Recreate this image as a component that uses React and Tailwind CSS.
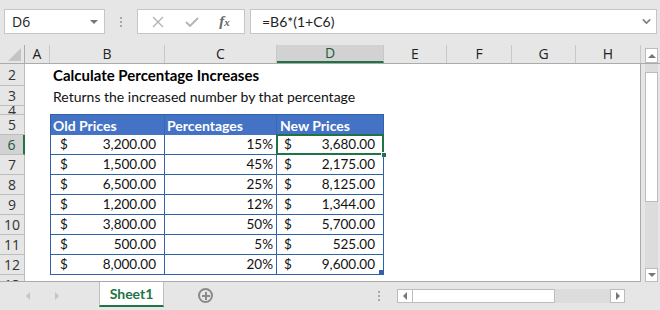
import { ChevronDown } from 'lucide-react';

const cols = [
  { key: 'A', w: 25 },
  { key: 'B', w: 115 },
  { key: 'C', w: 112 },
  { key: 'D', w: 107 },
  { key: 'E', w: 63 },
  { key: 'F', w: 65 },
  { key: 'G', w: 64 },
  { key: 'H', w: 65 },
];

const data = [
  ['3,200.00', '15%', '3,680.00'],
  ['1,500.00', '45%', '2,175.00'],
  ['6,500.00', '25%', '8,125.00'],
  ['1,200.00', '12%', '1,344.00'],
  ['3,800.00', '50%', '5,700.00'],
  ['500.00', '5%', '525.00'],
  ['8,000.00', '20%', '9,600.00'],
];

const cellFont = { fontFamily: 'Lato, "Liberation Sans", sans-serif' };
const uiFont = { fontFamily: '"Open Sans", "DejaVu Sans", sans-serif' };

function RowHead({ n, h, active }) {
  return (
    <div
      className={`w-[25px] shrink-0 flex items-center justify-center border-b border-r text-[14px] leading-none overflow-hidden ${
        active ? 'bg-[#d2d2d2] border-r-2 border-r-[#217346] border-b-[#bdbdbd] text-[#1e5a3a]' : 'bg-[#e6e6e6] border-[#bdbdbd] text-[#333]'
      }`}
      style={{ height: h, ...uiFont }}
    >
      {n}
    </div>
  );
}

function TableRow({ n, row, idx }) {
  const active = idx === 0;
  return (
    <div className="flex h-[20px]">
      <RowHead n={n} h={20} active={active} />
      <div className="w-[25px] shrink-0" />
      <div className="w-[115px] shrink-0 flex items-center justify-between pl-[9px] pr-[8px] border-l border-r border-b border-[#2f62a8] text-[13.5px] text-[#111]" style={cellFont}>
        <span>$</span>
        <span>{row[0]}</span>
      </div>
      <div className="w-[112px] shrink-0 flex items-center justify-end pr-[3px] border-r border-b border-[#2f62a8] text-[13.5px] text-[#111]" style={cellFont}>
        {row[1]}
      </div>
      <div className="relative w-[107px] shrink-0 flex items-center justify-between pl-[7px] pr-[8px] border-r border-b border-[#2f62a8] text-[13.5px] text-[#111]" style={cellFont}>
        <span>$</span>
        <span>{row[2]}</span>
        {active && (
          <>
            <div className="absolute -left-[1px] -top-[1px] -right-[1px] -bottom-[1px] border-2 border-[#217346]" />
            <div className="absolute -right-[4px] -bottom-[4px] w-[6px] h-[6px] bg-[#217346] border border-white" />
          </>
        )}
        {idx === 6 && <div className="absolute right-0 bottom-0 w-[4px] h-[4px] bg-[#2f62a8]" />}
      </div>
    </div>
  );
}

export default function App() {
  return (
    <div className="w-[660px] h-[310px] bg-[#e6e6e6] overflow-hidden relative select-none" style={uiFont}>
      {/* formula bar */}
      <div className="h-[45px] flex items-start pt-[9px] pl-[4px]">
        <div className="w-[101px] h-[25px] bg-white border border-[#c6c6c6] flex items-center justify-between pl-[7px] pr-[6px]">
          <span className="text-[14px] text-[#222]">D6</span>
          <span className="w-0 h-0 border-l-[4px] border-r-[4px] border-t-[4px] border-l-transparent border-r-transparent border-t-[#777]" />
        </div>
        <div className="w-[32px] h-[25px] flex flex-col items-center justify-center gap-[2px]">
          <span className="w-[2px] h-[2px] bg-[#a8a8a8]" />
          <span className="w-[2px] h-[2px] bg-[#a8a8a8]" />
          <span className="w-[2px] h-[2px] bg-[#a8a8a8]" />
        </div>
        <div className="w-[108px] h-[25px] bg-white border border-[#c6c6c6] flex items-center justify-around px-[4px]">
          <svg width="12" height="12" viewBox="0 0 12 12">
            <path d="M1 1 L11 11 M11 1 L1 11" stroke="#b3b3b3" strokeWidth="1.4" fill="none" />
          </svg>
          <svg width="14" height="12" viewBox="0 0 14 12">
            <path d="M1 6 L5 10 L13 2" stroke="#b3b3b3" strokeWidth="1.8" fill="none" />
          </svg>
          <span className="text-[15px] italic font-bold text-[#666] leading-none" style={{ fontFamily: '"Liberation Serif", serif' }}>
            f<span className="text-[11px]">x</span>
          </span>
        </div>
        <div className="ml-[5px] w-[407px] h-[25px] bg-white border border-[#c6c6c6] flex items-center justify-between pl-[11px] pr-[3px]">
          <span className="text-[14px] text-[#222]" style={cellFont}>=B6*(1+C6)</span>
          <ChevronDown size={13} strokeWidth={3} color="#808080" />
        </div>
      </div>

      {/* column headers */}
      <div className="flex h-[19px] border-b border-[#ababab]">
        <div className="w-[25px] shrink-0 border-r border-[#ababab] flex items-end justify-end pr-[3px] pb-[2px]">
          <svg width="13" height="13" viewBox="0 0 13 13">
            <path d="M13 0 L13 13 L0 13 Z" fill="#c4c4c4" />
          </svg>
        </div>
        {cols.map((c) => (
          <div
            key={c.key}
            className={`shrink-0 flex items-center justify-center text-[14px] leading-none border-r border-[#c8c8c8] ${
              c.key === 'D' ? 'bg-[#d2d2d2] border-b-2 border-b-[#217346] text-[#1e5a3a]' : 'text-[#222]'
            }`}
            style={{ width: c.w }}
          >
            {c.key}
          </div>
        ))}
        <div className="w-[4px]" />
        <div className="w-[13px] h-[15px] mt-[3px] bg-white border border-[#bcbcbc] flex items-center justify-center">
          <span className="w-0 h-0 border-l-[4px] border-r-[4px] border-b-[4px] border-l-transparent border-r-transparent border-b-[#777]" />
        </div>
      </div>

      {/* grid body */}
      <div className="flex">
        <div className="w-[641px] h-[218px] bg-white overflow-hidden border-r border-b border-[#ababab]">
          <div className="flex h-[22px]">
            <RowHead n="2" h={22} />
            <div className="pl-[28px] flex items-center text-[15px] font-bold text-black" style={cellFont}>
              Calculate Percentage Increases
            </div>
          </div>
          <div className="flex h-[20px]">
            <RowHead n="3" h={20} />
            <div className="pl-[28px] flex items-center text-[14px] text-[#111]" style={cellFont}>
              Returns the increased number by that percentage
            </div>
          </div>
          <div className="flex h-[9px]">
            <div className="w-[25px] h-[9px] bg-[#e6e6e6] border-r border-b border-[#bdbdbd] overflow-hidden flex justify-center text-[14px] leading-[14px] text-[#333]">
              <span className="-mt-[2px]">4</span>
            </div>
          </div>
          <div className="flex h-[20px]">
            <RowHead n="5" h={20} />
            <div className="w-[25px] shrink-0" />
            <div className="flex bg-[#4472c4] border-t border-l border-[#2f62a8] -mt-[1px] h-[21px] text-[14px] font-bold text-white" style={cellFont}>
              <div className="w-[114px] flex items-center pl-[2px] border-r border-[#3b66b4]">Old Prices</div>
              <div className="w-[112px] flex items-center pl-[2px] border-r border-[#3b66b4]">Percentages</div>
              <div className="w-[107px] flex items-center pl-[3px] border-r border-[#2f62a8]">New Prices</div>
            </div>
          </div>
          {data.map((row, i) => (
            <TableRow key={i} n={String(i + 6)} row={row} idx={i} />
          ))}
          <div className="flex h-[20px]">
            <RowHead n="13" h={20} />
          </div>
        </div>
        <div className="w-[4px]" />
        <div className="w-[13px] h-[218px] bg-[#dcdcdc] flex flex-col justify-between">
          <div className="mt-[8px] h-[130px] bg-white border border-[#bcbcbc]" />
          <div className="h-[14px] bg-white border border-[#bcbcbc] flex items-center justify-center">
            <span className="w-0 h-0 border-l-[4px] border-r-[4px] border-t-[4px] border-l-transparent border-r-transparent border-t-[#777]" />
          </div>
        </div>
      </div>

      {/* sheet tabs */}
      <div className="flex h-[27px]">
        <div className="w-[99px] flex items-center">
          <span className="ml-[26px] w-0 h-0 border-t-[4px] border-b-[4px] border-r-[4px] border-t-transparent border-b-transparent border-r-[#c4c4c4]" />
          <span className="ml-[25px] w-0 h-0 border-t-[4px] border-b-[4px] border-l-[4px] border-t-transparent border-b-transparent border-l-[#c4c4c4]" />
        </div>
        <div className="w-[65px] h-[25px] bg-white border-l border-r border-[#c0c0c0] border-b-2 border-b-[#217346] flex items-center justify-center text-[14px] font-bold text-[#217346]" style={cellFont}>
          Sheet1
        </div>
        <div className="w-[83px] flex items-center justify-center">
          <div className="w-[15px] h-[15px] rounded-full border-2 border-[#8a8a8a] flex items-center justify-center">
            <svg width="8" height="8" viewBox="0 0 8 8">
              <path d="M4 0 V8 M0 4 H8" stroke="#8a8a8a" strokeWidth="2" />
            </svg>
          </div>
        </div>
        <div className="w-[150px] flex items-center justify-end pr-[17px]">
          <div className="flex flex-col gap-[2px]">
            <span className="w-[2px] h-[2px] bg-[#a8a8a8]" />
            <span className="w-[2px] h-[2px] bg-[#a8a8a8]" />
            <span className="w-[2px] h-[2px] bg-[#a8a8a8]" />
          </div>
        </div>
        <div className="mt-[7px] w-[228px] h-[14px] bg-[#dcdcdc] flex">
          <div className="w-[16px] h-[14px] bg-white border border-[#bcbcbc] flex items-center justify-center">
            <span className="w-0 h-0 border-t-[4px] border-b-[4px] border-r-[4px] border-t-transparent border-b-transparent border-r-[#777]" />
          </div>
          <div className="w-[142px] h-[14px] bg-white border-t border-b border-r border-[#bcbcbc]" />
          <div className="flex-1" />
          <div className="w-[15px] h-[14px] bg-white border border-[#bcbcbc] flex items-center justify-center">
            <span className="w-0 h-0 border-t-[4px] border-b-[4px] border-l-[4px] border-t-transparent border-b-transparent border-l-[#777]" />
          </div>
        </div>
      </div>
    </div>
  );
}
